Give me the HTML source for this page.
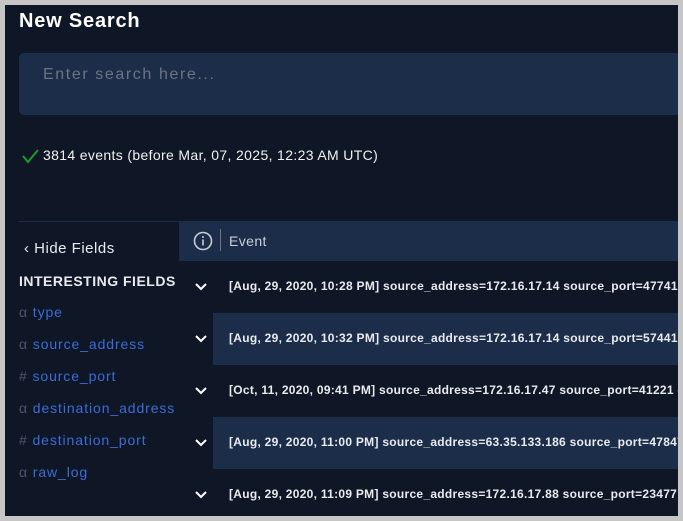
<!DOCTYPE html>
<html><head><style>
body{margin:0;width:683px;height:521px;background:#c6c6c6;overflow:hidden;font-family:"Liberation Sans",sans-serif;}
.f{position:absolute;left:5px;top:5px;width:673px;height:511px;background:#0f1726;overflow:hidden;}
.a{position:absolute;white-space:nowrap;}
h1{position:absolute;left:14px;top:5px;margin:0;font-size:20px;color:#fff;font-weight:bold;letter-spacing:0.8px;}
.search{position:absolute;left:14px;top:48px;width:680px;height:62px;background:#1c2d4a;border-radius:5px;}
.search span{position:absolute;left:24px;top:13px;color:#6d7480;font-size:16px;letter-spacing:1.6px;}
.line{position:absolute;left:14px;top:216px;width:160px;height:1px;background:#1c2d4a;}
.hdr{position:absolute;left:174px;top:216px;width:520px;height:40px;background:#1c2d4a;}
.row{position:absolute;left:174px;width:520px;height:52px;}
.row .t{position:absolute;left:50px;top:18px;color:#e8eaee;font-size:12px;font-weight:bold;white-space:nowrap;letter-spacing:0.28px;}
.row .c{position:absolute;left:15px;top:18px;}
.blue{background:linear-gradient(to right,#0f1726 34px,#1c2d4a 34px);}
.fld{position:absolute;left:14px;font-size:14px;color:#3d6bd6;letter-spacing:0.9px;}
.fld b{font-weight:normal;color:#4a5670;}
</style></head><body><div class="f">
<h1>New Search</h1>
<div class="search"><span>Enter search here...</span></div>
<svg class="a" style="left:16px;top:143px" width="20" height="16"><path d="M2 8 L7 14 L17 2" stroke="#1e9a2e" stroke-width="2" fill="none"/></svg>
<div class="a" style="left:38px;top:142px;color:#f0f0f0;font-size:14px;letter-spacing:0.35px">3814 events (before Mar, 07, 2025, 12:23 AM UTC)</div>
<div class="line"></div>
<div class="a" style="left:19px;top:235px;color:#e8eaee;font-size:15px;letter-spacing:0.5px">‹ Hide Fields</div>
<div class="a" style="left:14px;top:268px;color:#e8eaee;font-size:14px;font-weight:bold;letter-spacing:0.5px">INTERESTING FIELDS</div>
<div class="fld" style="top:299px"><b>α</b> type</div>
<div class="fld" style="top:331px"><b>α</b> source_address</div>
<div class="fld" style="top:363px"><b>#</b> source_port</div>
<div class="fld" style="top:395px"><b>α</b> destination_address</div>
<div class="fld" style="top:427px"><b>#</b> destination_port</div>
<div class="fld" style="top:459px"><b>α</b> raw_log</div>
<div class="hdr">
<svg class="a" style="left:14px;top:10px" width="20" height="20"><circle cx="10" cy="10" r="8.5" stroke="#c8ccd4" stroke-width="1.6" fill="none"/><rect x="9.2" y="8.5" width="1.6" height="6" fill="#c8ccd4"/><circle cx="10" cy="6" r="1" fill="#c8ccd4"/></svg>
<div class="a" style="left:41px;top:8px;width:1px;height:22px;background:#6b7588"></div>
<div class="a" style="left:50px;top:12px;color:#c9cfda;font-size:14px;letter-spacing:0.4px">Event</div>
</div>
<div class="row" style="top:256px"><svg class="c" width="14" height="14"><path d="M2 5 L7 10 L12 5" stroke="#fff" stroke-width="2" fill="none"/></svg><div class="t">[Aug, 29, 2020, 10:28 PM] source_address=172.16.17.14 source_port=47741</div></div>
<div class="row blue" style="top:308px"><svg class="c" width="14" height="14"><path d="M2 5 L7 10 L12 5" stroke="#fff" stroke-width="2" fill="none"/></svg><div class="t">[Aug, 29, 2020, 10:32 PM] source_address=172.16.17.14 source_port=57441</div></div>
<div class="row" style="top:360px"><svg class="c" width="14" height="14"><path d="M2 5 L7 10 L12 5" stroke="#fff" stroke-width="2" fill="none"/></svg><div class="t">[Oct, 11, 2020, 09:41 PM] source_address=172.16.17.47 source_port=41221 -</div></div>
<div class="row blue" style="top:412px"><svg class="c" width="14" height="14"><path d="M2 5 L7 10 L12 5" stroke="#fff" stroke-width="2" fill="none"/></svg><div class="t">[Aug, 29, 2020, 11:00 PM] source_address=63.35.133.186 source_port=47847</div></div>
<div class="row" style="top:464px"><svg class="c" width="14" height="14"><path d="M2 5 L7 10 L12 5" stroke="#fff" stroke-width="2" fill="none"/></svg><div class="t">[Aug, 29, 2020, 11:09 PM] source_address=172.16.17.88 source_port=23477</div></div>
</div></body></html>
